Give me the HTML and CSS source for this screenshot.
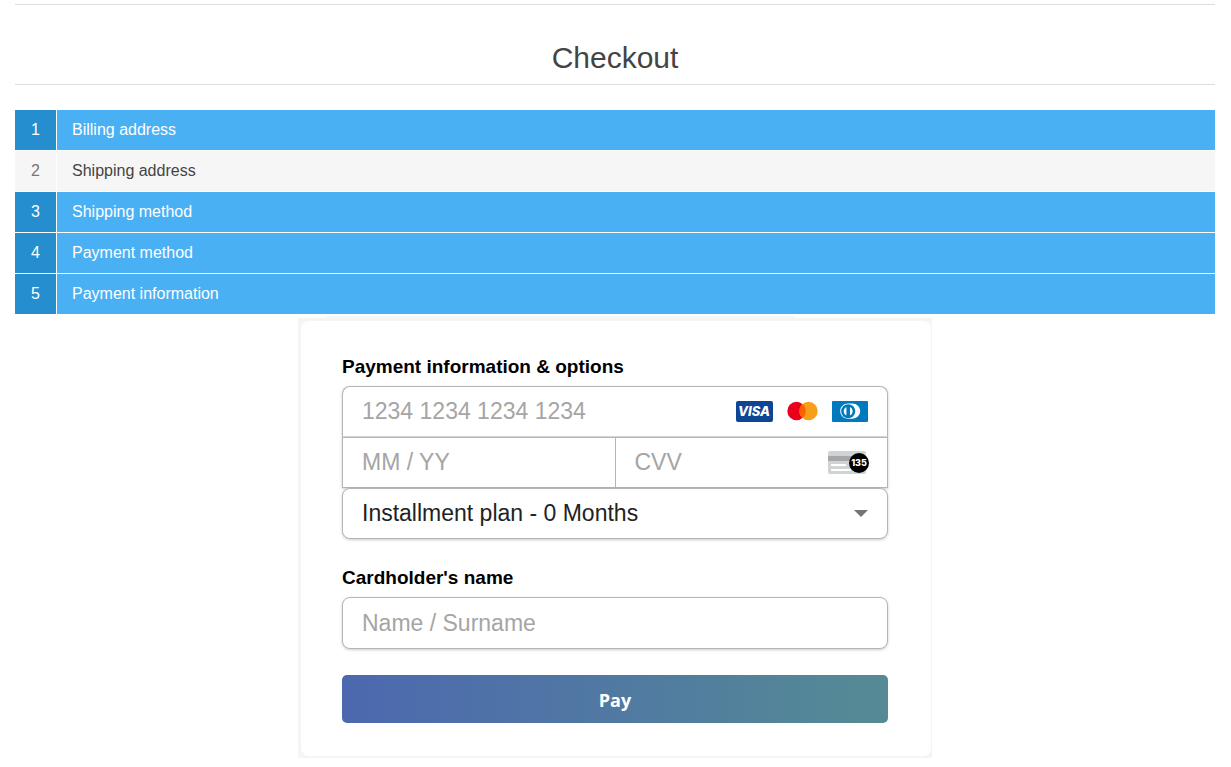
FILE: index.html
```html
<!DOCTYPE html>
<html lang="en">
<head>
    <meta charset="UTF-8">
    <meta name="viewport" content="width=device-width, initial-scale=1.0">
    <title>Checkout</title>
    <link rel="stylesheet" href="styles.css">
</head>
<body>
    <main class="checkout">
        <h1 class="page-title">Checkout</h1>

        <!-- Steps -->
        <ol class="steps">
            <li class="step active">
                <span class="step-number">1</span>
                <span class="step-title">Billing address</span>
            </li>
            <li class="step">
                <span class="step-number">2</span>
                <span class="step-title">Shipping address</span>
            </li>
            <li class="step active">
                <span class="step-number">3</span>
                <span class="step-title">Shipping method</span>
            </li>
            <li class="step active">
                <span class="step-number">4</span>
                <span class="step-title">Payment method</span>
            </li>
            <li class="step active">
                <span class="step-number">5</span>
                <span class="step-title">Payment information</span>
            </li>
        </ol>

        <!-- Payment form -->
        <div class="payment-frame">
            <form class="payment-form">
                <label class="form-label" for="card-number">Payment information &amp; options</label>
                <div class="field field-top">
                    <input id="card-number" type="text" placeholder="1234 1234 1234 1234">
                    <div class="card-brands">
                        <!-- Visa -->
                        <svg width="37" height="21" viewBox="0 0 37 21">
                            <rect width="37" height="21" rx="2" fill="#0e4595"/>
                            <text class="visa-text" x="18" y="15" text-anchor="middle">VISA</text>
                        </svg>
                        <!-- Mastercard -->
                        <svg width="31" height="21" viewBox="0 0 31 21">
                            <circle cx="9.5" cy="10" r="9.2" fill="#eb001b"/>
                            <circle cx="21.5" cy="10" r="9.2" fill="#f79e1b"/>
                            <path d="M15.5 3a9.2 9.2 0 0 1 0 14a9.2 9.2 0 0 1 0-14z" fill="#ff5f00"/>
                        </svg>
                        <!-- Diners Club -->
                        <svg width="36" height="21" viewBox="0 0 36 21">
                            <rect width="36" height="21" rx="1" fill="#0079be"/>
                            <path d="M16 2.500h4c4.600 0 8.200 3.400 8.200 7.600s-3.600 7.700-8.200 7.700h-4c-4.400 0-7.800-3.400-7.800-7.700s3.400-7.600 7.800-7.600z" fill="#fff"/>
                            <circle cx="16.200" cy="10.200" r="7" fill="#0079be"/>
                            <path d="M14.400 6a4.600 4.600 0 0 0 0 8.400zM18 6a4.600 4.600 0 0 1 0 8.400z" fill="#fff"/>
                        </svg>
                    </div>
                </div>
                <div class="field-row">
                    <div class="field">
                        <input type="text" placeholder="MM / YY" aria-label="Expiry date">
                    </div>
                    <div class="field">
                        <input type="text" placeholder="CVV" aria-label="CVV">
                        <svg class="cvv-icon" width="42" height="24" viewBox="0 0 42 24">
                            <rect width="38" height="23" rx="2" fill="#cfd3d3"/>
                            <rect y="5" width="38" height="5" fill="#a5a7a9"/>
                            <path d="M3 14h15M3 19h20" stroke="#fff" stroke-width="2"/>
                            <circle cx="31" cy="12" r="10" fill="#000"/>
                            <text class="cvv-text" x="31" y="15" text-anchor="middle">135</text>
                        </svg>
                    </div>
                </div>
                <div class="field field-select">
                    <select aria-label="Installment plan">
                        <option>Installment plan - 0 Months</option>
                    </select>
                    <svg class="select-arrow" width="14" height="7" viewBox="0 0 14 7">
                        <path d="M0 0h14l-7 7z" fill="#757575"/>
                    </svg>
                </div>

                <label class="form-label name-label" for="card-name">Cardholder's name</label>
                <div class="field field-name">
                    <input id="card-name" type="text" placeholder="Name / Surname">
                </div>

                <button class="pay-button" type="submit">Pay</button>
            </form>
        </div>
    </main>
</body>
</html>
```

FILE: styles.css
```css
:root {
    --field-border: #b5b5b5;
    --field-height: 51px;
}

* {
    box-sizing: border-box;
}

body {
    margin: 0;
    background: #fff;
    color: #444;
    font-family: Arial, "Liberation Sans", sans-serif;
    font-size: 16px;
}

.checkout {
    margin: 0 16px 0 15px;
    padding-top: 4px;
}

.page-title {
    margin: 0 0 25px;
    padding: 33px 0 6px;
    border-top: 1px solid #ddd;
    border-bottom: 1px solid #ddd;
    font-size: 30px;
    font-weight: normal;
    line-height: 40px;
    text-align: center;
}

/* Steps */
.steps {
    display: flex;
    flex-direction: column;
    gap: 1px;
    margin: 0;
    padding: 0;
    list-style: none;
}

.step {
    display: flex;
    gap: 1px;
    line-height: 40px;
}

.step-number {
    width: 41px;
    background: #f6f6f6;
    color: #777;
    text-align: center;
}

.step-title {
    flex: 1;
    padding-left: 15px;
    background: #f6f6f6;
}

.step.active {
    color: #fff;
}

.step.active .step-number {
    background: #258ecf;
    color: #fff;
}

.step.active .step-title {
    background: #4ab0f4;
}

/* Payment form */
.payment-frame {
    position: relative;
    max-width: 634px;
    margin: 4px auto 0;
    padding: 3px 1px 2px 3px;
    background: #f5f5f5;
}

.payment-frame::before {
    content: "";
    position: absolute;
    top: -2px;
    left: 28px;
    width: 74%;
    height: 2px;
    background: #f7f7f7;
}

.payment-form {
    display: flex;
    flex-direction: column;
    padding: 34px 43px 33px 41px;
    background: #fff;
    border-radius: 8px;
}

.form-label {
    margin-bottom: 7px;
    color: #000;
    font-size: 19px;
    font-weight: bold;
    line-height: 24px;
}

.name-label {
    margin-top: 27px;
}

.field {
    display: flex;
    flex: 1;
    align-items: center;
    min-width: 0;
    height: var(--field-height);
    padding: 0 19px;
    border: 1px solid var(--field-border);
    background: #fff;
}

.field input,
.field select {
    flex: 1;
    min-width: 0;
    height: 100%;
    padding: 0;
    border: none;
    outline: none;
    background: none;
    color: #222;
    font-family: inherit;
    font-size: 23px;
}

.field input::placeholder {
    color: #a5a5a5;
    opacity: 1;
}

.field-top,
.field-select,
.field-name {
    flex: none;
    box-shadow: 0 1px 3px rgba(0, 0, 0, 0.2);
}

.field-top {
    border-bottom-color: #ddd;
    border-radius: 8px 8px 0 0;
}

.field-row {
    display: flex;
    box-shadow: 0 1px 3px rgba(0, 0, 0, 0.2);
}

.field-row .field + .field {
    border-left: none;
}

.card-brands {
    display: flex;
    gap: 14px;
}

.visa-text {
    fill: #fff;
    font: italic 800 13px Inter, sans-serif;
}

.cvv-icon {
    margin-right: -2px;
}

.cvv-text {
    fill: #fff;
    font: 800 9px Inter, sans-serif;
}

.field-select {
    position: relative;
    border-radius: 8px;
}

.field-select select {
    padding-bottom: 2px;
    appearance: none;
}

.select-arrow {
    position: absolute;
    right: 19px;
    pointer-events: none;
}

.field-name {
    height: 52px;
    border-radius: 8px;
}

.pay-button {
    height: 48px;
    margin-top: 26px;
    padding: 2px 0 0;
    border: none;
    border-radius: 5px;
    background: linear-gradient(to right, #4c68af, #558b94);
    color: #fff;
    font-family: "Open Sans", "Noto Sans", sans-serif;
    font-size: 18px;
    font-weight: bold;
    cursor: pointer;
}
```
